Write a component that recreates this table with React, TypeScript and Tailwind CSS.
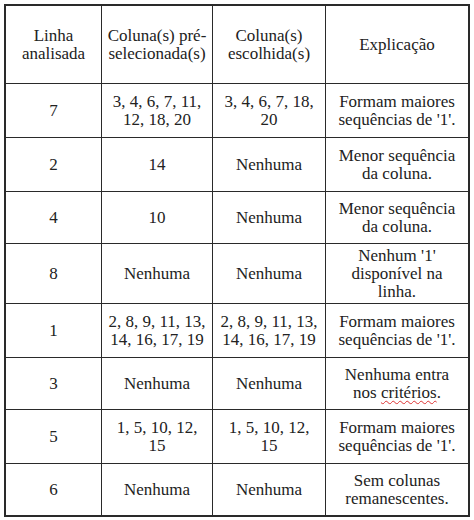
const rows: { h: string; linha: string; pre: React.ReactNode; esc: React.ReactNode; exp: React.ReactNode }[] = [
  {
    h: 'h-[54px]',
    linha: '7',
    pre: <>3, 4, 6, 7, 11,<br />12, 18, 20</>,
    esc: <>3, 4, 6, 7, 18,<br />20</>,
    exp: <>Formam maiores<br />sequências de '1'.</>,
  },
  { h: 'h-[54px]', linha: '2', pre: '14', esc: 'Nenhuma', exp: <>Menor sequência<br />da coluna.</> },
  { h: 'h-[52px]', linha: '4', pre: '10', esc: 'Nenhuma', exp: <>Menor sequência<br />da coluna.</> },
  { h: 'h-[60px]', linha: '8', pre: 'Nenhuma', esc: 'Nenhuma', exp: <>Nenhum '1'<br />disponível na<br />linha.</> },
  {
    h: 'h-[54px]',
    linha: '1',
    pre: <>2, 8, 9, 11, 13,<br />14, 16, 17, 19</>,
    esc: <>2, 8, 9, 11, 13,<br />14, 16, 17, 19</>,
    exp: <>Formam maiores<br />sequências de '1'.</>,
  },
  {
    h: 'h-[52px]',
    linha: '3',
    pre: 'Nenhuma',
    esc: 'Nenhuma',
    exp: <>Nenhuma entra<br />nos <span className="underline decoration-wavy decoration-[#d33] decoration-1 underline-offset-2">critérios</span>.</>,
  },
  {
    h: 'h-[54px]',
    linha: '5',
    pre: <>1, 5, 10, 12,<br />15</>,
    esc: <>1, 5, 10, 12,<br />15</>,
    exp: <>Formam maiores<br />sequências de '1'.</>,
  },
  { h: 'h-[51px]', linha: '6', pre: 'Nenhuma', esc: 'Nenhuma', exp: <>Sem colunas<br />remanescentes.</> },
];

const cell = "flex items-center justify-center text-center border-[#2a2a2a] font-['Times_New_Roman']";

const Cell = ({ className, children }: { className: string; children: React.ReactNode }) => (
  <div className={`${cell} ${className}`}>
    <div className="font-['Times_New_Roman']">{children}</div>
  </div>
);

const App = () => {
  return (
    <div className="bg-white w-[474px] h-[520px] pt-[4px] pl-[4px] font-['Times_New_Roman']">
      <div className="w-[466px] border-2 border-[#2a2a2a] grid grid-cols-[96px_111px_113px_142px] text-[17px] leading-[18px] text-[#222]">
        {/* cabeçalho */}
        <Cell className="h-[78px] border-r border-b">Linha<br />analisada</Cell>
        <Cell className="h-[78px] border-r border-b">Coluna(s) pré-<br />selecionada(s)</Cell>
        <Cell className="h-[78px] border-r border-b">Coluna(s)<br />escolhida(s)</Cell>
        <Cell className="h-[78px] border-b">Explicação</Cell>

        {rows.map((r, i) => {
          const b = i === rows.length - 1 ? '' : 'border-b';
          return (
            <div key={i} className="contents">
              <Cell className={`${r.h} border-r ${b}`}>{r.linha}</Cell>
              <Cell className={`${r.h} border-r ${b}`}>{r.pre}</Cell>
              <Cell className={`${r.h} border-r ${b}`}>{r.esc}</Cell>
              <Cell className={`${r.h} ${b}`}>{r.exp}</Cell>
            </div>
          );
        })}
      </div>
    </div>
  );
};

export default App;
